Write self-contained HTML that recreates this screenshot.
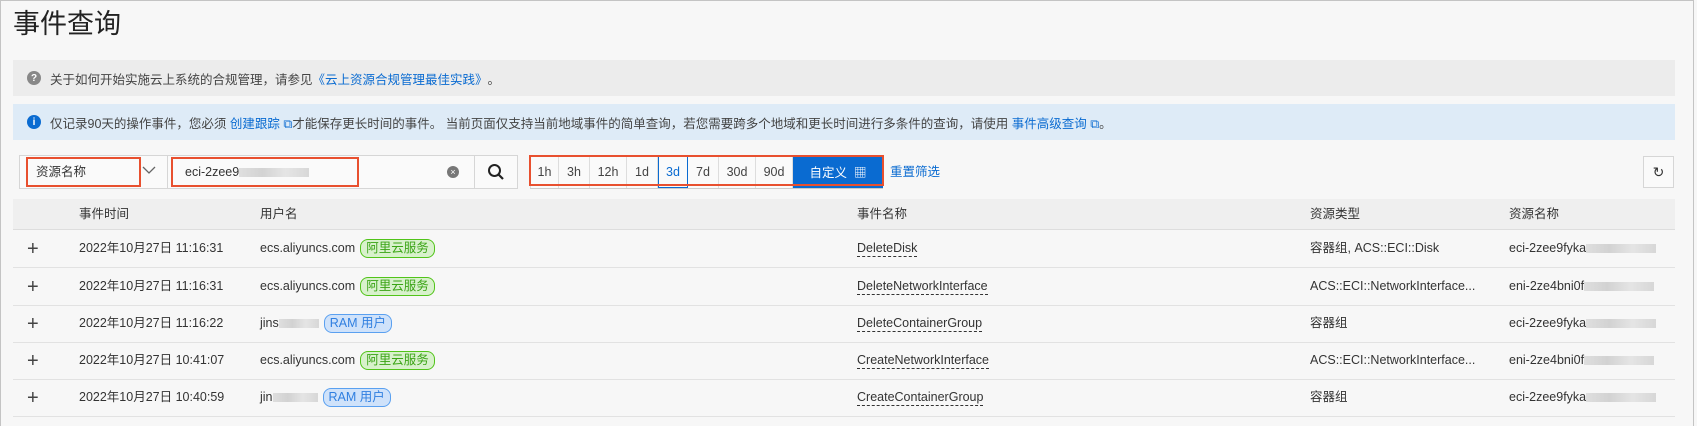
<!DOCTYPE html>
<html><head><meta charset="utf-8">
<style>
*{box-sizing:border-box;margin:0;padding:0}
body{width:1697px;height:426px;overflow:hidden;background:#f7f7f7;font-family:"Liberation Sans","Noto Sans CJK SC",sans-serif;color:#333;font-size:13px;position:relative}
.frame{position:absolute;left:0;top:0;width:1694px;height:426px;border:1px solid #c4c4c4;border-bottom:none}
.abs{position:absolute}
.title{left:13px;top:4px;font-size:27px;color:#222;font-weight:400;line-height:40px}
.bar{left:13px;width:1662px;height:36px;display:flex;align-items:center;padding-left:14px;font-size:12.5px;color:#444}
.ic{width:14px;height:14px;border-radius:50%;color:#fff;font-size:10px;font-weight:bold;display:inline-flex;align-items:center;justify-content:center;margin-right:9px}
a{color:#0a6bd1;text-decoration:none}
.box{border:1px solid #d6d6d6;background:#fafafa;height:34px;top:155px}
.red{border:2px solid #e8502f}
.fl{display:flex;align-items:center;font-size:12.5px;line-height:1}
.tg{left:530px;top:155px;height:34px;display:flex;background:#fafafa;border-bottom:1px solid #ccc}
.tg div{height:33px;display:flex;align-items:center;justify-content:center;border-right:1px solid #ddd;font-size:12.5px;color:#444}
.row{left:13px;width:1662px;height:38px;border-bottom:1px solid #e2e2e2}
.c{position:absolute;top:0;height:37px;display:flex;align-items:center;font-size:12.5px;color:#333;white-space:nowrap;line-height:1}
.tag{display:inline-flex;align-items:center;border:1px solid #52c41a;background:#d8f1cc;color:#3aa415;border-radius:8px;padding:0 5px;height:19px;margin-left:5px;font-size:12.5px}
.tag.b{border-color:#5aa0f0;background:#cfe2fa;color:#2f7fe0}
.blur{display:inline-block;width:56px;height:9px;background:linear-gradient(90deg,#d8d8d8,#c9c9c9,#e0e0e0,#cfcfcf);opacity:.8}
.ev{border-bottom:1px dashed #333;line-height:15px}
.plus{font-size:20px;color:#444}
</style></head><body>
<div class="frame"></div>
<div class="abs title">事件查询</div>
<div class="abs bar" style="top:60px;background:#ececec"><span class="ic" style="background:#888">?</span>关于如何开始实施云上系统的合规管理，请参见<a>《云上资源合规管理最佳实践》</a>。</div>
<div class="abs bar" style="top:104px;background:#deebf7"><span class="ic" style="background:#0a6bd1">i</span>仅记录90天的操作事件，您必须&nbsp;<a>创建跟踪 ⧉</a>才能保存更长时间的事件。 当前页面仅支持当前地域事件的简单查询，若您需要跨多个地域和更长时间进行多条件的查询，请使用&nbsp;<a>事件高级查询 ⧉</a>。</div>

<div class="abs box" style="left:19px;width:149px"></div>
<div class="abs red fl" style="left:26px;top:157px;width:115px;height:30px;padding-left:8px">资源名称</div>
<svg class="abs" style="left:142px;top:165px" width="14" height="10" viewBox="0 0 14 10"><path d="M1 2l6 6 6-6" fill="none" stroke="#666" stroke-width="1.3"/></svg>
<div class="abs box" style="left:167px;width:308px"></div>
<div class="abs red fl" style="left:171px;top:157px;width:188px;height:30px;padding-left:12px">eci-2zee9<span class="blur" style="width:70px"></span></div>
<div class="abs" style="left:447px;top:166px;width:12px;height:12px;border-radius:50%;background:#777;color:#fff;font-size:9px;text-align:center;line-height:12px">×</div>
<div class="abs box" style="left:474px;width:44px;display:flex;align-items:center;justify-content:center"><svg width="18" height="18" viewBox="0 0 18 18"><circle cx="7.5" cy="7.5" r="5.5" fill="none" stroke="#222" stroke-width="2"/><path d="M11.5 11.5L16 16" stroke="#222" stroke-width="2.2"/></svg></div>

<div class="abs tg">
<div style="width:29px;border-left:1px solid #ddd">1h</div><div style="width:31px">3h</div><div style="width:37px">12h</div><div style="width:31px">1d</div><div style="width:30px;border:1px solid #0a6bd1;color:#0a6bd1">3d</div><div style="width:31px">7d</div><div style="width:37px">30d</div><div style="width:37px">90d</div><div style="width:90px;background:#0a6bd1;color:#fff;border:none">自定义 &nbsp;▦</div>
</div>
<div class="abs red" style="left:529px;top:155px;width:355px;height:31px"></div>
<div class="abs fl" style="left:890px;top:155px;height:34px;color:#0a6bd1">重置筛选</div>
<div class="abs box" style="left:1643px;top:156px;width:31px;height:32px;text-align:center;line-height:30px;font-size:14px">↻</div>

<div class="abs row" style="top:199px;height:31px;background:#efefef;border-bottom:1px solid #ddd"></div>
<div class="abs" style="top:199px;left:0;width:100%;height:31px;font-size:12.5px;color:#555"><span class="c" style="left:79px;height:31px">事件时间</span><span class="c" style="left:260px;height:31px">用户名</span><span class="c" style="left:857px;height:31px">事件名称</span><span class="c" style="left:1310px;height:31px">资源类型</span><span class="c" style="left:1509px;height:31px">资源名称</span></div>

<div class="abs row" style="top:230px"><span class="c plus" style="left:14px">+</span><span class="c" style="left:66px">2022年10月27日 11:16:31</span><span class="c" style="left:247px">ecs.aliyuncs.com<span class="tag">阿里云服务</span></span><span class="c" style="left:844px"><span class="ev">DeleteDisk</span></span><span class="c" style="left:1297px">容器组, ACS::ECI::Disk</span><span class="c" style="left:1496px">eci-2zee9fyka<span class="blur" style="width:70px"></span></span></div>
<div class="abs row" style="top:268px"><span class="c plus" style="left:14px">+</span><span class="c" style="left:66px">2022年10月27日 11:16:31</span><span class="c" style="left:247px">ecs.aliyuncs.com<span class="tag">阿里云服务</span></span><span class="c" style="left:844px"><span class="ev">DeleteNetworkInterface</span></span><span class="c" style="left:1297px">ACS::ECI::NetworkInterface...</span><span class="c" style="left:1496px">eni-2ze4bni0f<span class="blur" style="width:70px"></span></span></div>
<div class="abs row" style="top:305px"><span class="c plus" style="left:14px">+</span><span class="c" style="left:66px">2022年10月27日 11:16:22</span><span class="c" style="left:247px">jins<span class="blur" style="width:40px"></span><span class="tag b">RAM 用户</span></span><span class="c" style="left:844px"><span class="ev">DeleteContainerGroup</span></span><span class="c" style="left:1297px">容器组</span><span class="c" style="left:1496px">eci-2zee9fyka<span class="blur" style="width:70px"></span></span></div>
<div class="abs row" style="top:342px"><span class="c plus" style="left:14px">+</span><span class="c" style="left:66px">2022年10月27日 10:41:07</span><span class="c" style="left:247px">ecs.aliyuncs.com<span class="tag">阿里云服务</span></span><span class="c" style="left:844px"><span class="ev">CreateNetworkInterface</span></span><span class="c" style="left:1297px">ACS::ECI::NetworkInterface...</span><span class="c" style="left:1496px">eni-2ze4bni0f<span class="blur" style="width:70px"></span></span></div>
<div class="abs row" style="top:379px"><span class="c plus" style="left:14px">+</span><span class="c" style="left:66px">2022年10月27日 10:40:59</span><span class="c" style="left:247px">jin<span class="blur" style="width:45px"></span><span class="tag b">RAM 用户</span></span><span class="c" style="left:844px"><span class="ev">CreateContainerGroup</span></span><span class="c" style="left:1297px">容器组</span><span class="c" style="left:1496px">eci-2zee9fyka<span class="blur" style="width:70px"></span></span></div>
</body></html>
